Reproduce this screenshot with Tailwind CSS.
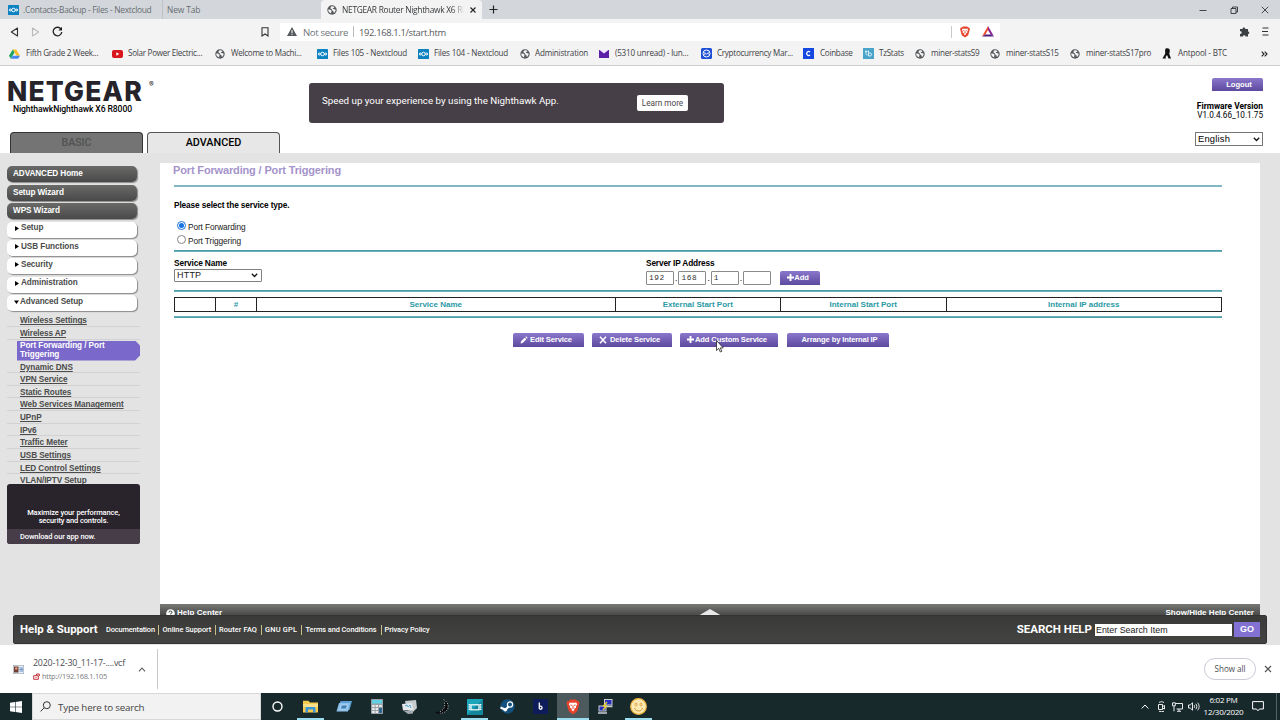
<!DOCTYPE html>
<html lang="en">
<head>
  <meta charset="UTF-8" />
  <meta name="viewport" content="width=device-width, initial-scale=1.0"/>
  <title>NETGEAR Router Nighthawk X6 R8000</title>
  <script src="https://cdn.jsdelivr.net/npm/@tailwindcss/browser@4"></script>
</head>
<body class="w-[1280px] h-[720px] overflow-hidden bg-white flex flex-col font-['Liberation_Sans',Arial,sans-serif] text-[8.3px] leading-none text-black whitespace-nowrap">

  <!-- Shared icons -->
  <svg class="hidden">
    <symbol id="globe" viewBox="0 0 10 10">
      <circle cx="5" cy="5" r="4.7" fill="#55585b"/>
      <path d="M1.200 4.600c1.200-.4 2.200-.1 2.800.5.500.6.800 1.200.3 1.800-.4.500.1.900-.1 1.500C2.300 8 1.100 6.600 1.200 4.600zM4.300 1.500c1.200-.5 2.400-.1 3.200.6-.2.900-.9.700-1.500 1.100-.5.400.1.900.8.900.7.100 1.100.6 1.900.6-.1 1.400-.7 2.500-1.700 3.200-.5-.6-.3-1.600-1.100-1.900-.9-.3-.9-1-.9-1.400C4.900 4 3.700 4.200 3.500 3.300c-.1-.7.300-1.400.8-1.800z" fill="#f3f3f3"/>
    </symbol>
    <symbol id="nextcloud" viewBox="0 0 11 10">
      <rect width="11" height="10" rx=".6" fill="#0d82c0"/>
      <g fill="none" stroke="#fff" stroke-width="1"><circle cx="5.500" cy="5" r="1.800"/><circle cx="2.300" cy="5" r="1"/><circle cx="8.700" cy="5" r="1"/></g>
    </symbol>
    <symbol id="lion" viewBox="0 0 12 14">
      <path d="M3.500.5h5l1.200 1.300 1.300-.1.700 2-.4 1.200-1.400 5.200c-.2.600-.5 1-1 1.300L6 13.500l-2.900-2.100c-.5-.3-.8-.7-1-1.300L.7 4.900.3 3.700l.7-2 1.300.1z" fill="#e8432a"/>
      <path d="M3.300 3l1.400.3h2.600L8.700 3l1 1.700-1.200 1.800.3 1-1.800 1.300.1 1L6 10.800 4.900 9.800l.1-1-1.800-1.300.3-1-1.200-1.800z" fill="#fff"/>
      <path d="M3.700 5.200l1.400.5M8.300 5.200l-1.400.5M6 5.500v2M5 7.900h2" stroke="#e8432a" stroke-width=".8" fill="none"/>
    </symbol>
  </svg>

  <!-- Tab strip -->
  <div class="h-[19px] shrink-0 bg-[#d3d7db] flex items-center font-['Open_Sans',sans-serif] text-[8.400px] tracking-[-0.29px] text-[#686d72]">
    <div class="w-[163px] h-full shrink-0 flex items-center pl-2 border-r border-[#bfc3c6]">
      <svg class="w-[11px] h-[10px]"><use href="#nextcloud"/></svg>
      <span class="ml-[4px] mt-px">.Contacts-Backup - Files - Nextcloud</span>
    </div>
    <div class="w-[158px] shrink-0 pl-[4px] pt-px tracking-[-0.1px]">New Tab</div>
    <div class="w-[161px] h-full shrink-0 flex items-center pl-[6px] bg-[#f3f3f3] text-[#3c4043] rounded-t-sm">
      <svg class="w-[10px] h-[10px]"><use href="#globe"/></svg>
      <span class="ml-[5px] mt-px w-[122px] overflow-hidden bg-gradient-to-r from-[#303336] from-90% to-[#f3f3f3] bg-clip-text text-transparent leading-3">NETGEAR Router Nighthawk X6 R8000</span>
      <svg class="ml-[6px] w-[6px] h-[6px]" viewBox="0 0 6 6"><path d="M.5.5l5 5M5.500.500l-5 5" stroke="#222" stroke-width="1.100"/></svg>
    </div>
    <svg class="ml-[7px] w-[9px] h-[9px]" viewBox="0 0 9 9"><path d="M4.500.500v8M.5 4.500h8" stroke="#222" stroke-width="1.200"/></svg>
    <div class="ml-auto flex items-center pr-[11px] gap-[23px]">
      <svg class="w-[8px] h-[8px]" viewBox="0 0 8 8"><path d="M.5 4.500h7" stroke="#222" stroke-width=".8"/></svg>
      <svg class="w-[8px] h-[8px]" viewBox="0 0 8 8"><path d="M1 2.500h5v5H1zM2.500 2.500V1h5v5H6" fill="none" stroke="#222" stroke-width=".8"/></svg>
      <svg class="w-[8px] h-[8px]" viewBox="0 0 8 8"><path d="M.800.800l6.400 6.400M7.200.800L.8 7.200" stroke="#222" stroke-width=".8"/></svg>
    </div>
  </div>

  <!-- Address bar -->
  <div class="h-[25px] shrink-0 bg-[#f3f3f3] flex items-center font-['Open_Sans',sans-serif] text-[9.600px] tracking-[-0.35px] text-[#70757a]">
    <svg class="ml-[10px] w-[9px] h-[10px]" viewBox="0 0 9 10"><path d="M7.500 1v8L1.300 5z" fill="none" stroke="#333" stroke-width="1.100" stroke-linejoin="round"/></svg>
    <svg class="ml-[12px] w-[9px] h-[10px]" viewBox="0 0 9 10"><path d="M1.500 1v8l6.200-4z" fill="none" stroke="#bbb" stroke-width="1.100" stroke-linejoin="round"/></svg>
    <svg class="ml-[12px] w-[11px] h-[11px]" viewBox="0 0 11 11"><path d="M9.200 3.300A4.300 4.300 0 1 0 9.800 6" fill="none" stroke="#222" stroke-width="1.300"/><path d="M10 .8v3.600H6.400z" fill="#222"/></svg>
    <svg class="ml-[198px] w-[8px] h-[10px]" viewBox="0 0 8 10"><path d="M1 .8h6v8.200L4 7 1 9z" fill="none" stroke="#333" stroke-width="1.100"/></svg>
    <div class="ml-[11px] w-[720px] h-[18px] bg-white flex items-center">
      <svg class="ml-[7px] w-[10px] h-[9px]" viewBox="0 0 10 9"><path d="M5 0l5 9H0z" fill="#55585b"/><path d="M5 3v3M5 6.700v1.200" stroke="#fff" stroke-width="1"/></svg>
      <span class="ml-[6px] mt-[2px] w-[50px]">Not secure</span>
      <span class="w-[6px] h-[11px] border-l border-[#bbb]"></span>
      <span class="mt-[2px] text-[9.400px] tracking-[-0.35px] text-[#55595d]">192.168.1.1/start.htm</span>
      <span class="ml-auto w-px h-[12px] bg-[#c8c8c8]"></span>
      <svg class="ml-[7px] w-[12px] h-[12px]"><use href="#lion"/></svg>
      <svg class="ml-[11px] mr-[6px] w-[12px] h-[11px]" viewBox="0 0 12 11"><path d="M6 0L0 10.500l3.400-2L6 4z" fill="#f0502d"/><path d="M6 0l6 10.500-3.400-2L6 4z" fill="#8b2391"/><path d="M0 10.500h12l-3.400-2H3.400z" fill="#4d2080"/></svg>
    </div>
    <svg class="ml-auto w-[11px] h-[11px]" viewBox="0 0 11 11"><path d="M1 3h2.500a1.400 1.400 0 1 1 2.800 0H9v2.500a1.300 1.300 0 1 1 0 2.600v2.400H6.500a1.300 1.300 0 1 0-2.600 0H1V7.800a1.300 1.300 0 1 0 0-2.500z" fill="#3c4043"/></svg>
    <svg class="ml-[12px] mr-[11px] w-[7px] h-[9px]" viewBox="0 0 7 9"><path d="M.5 1h6M0 4.500h6M.5 8h6" stroke="#333" stroke-width="1"/></svg>
  </div>

  <!-- Bookmarks -->
  <div class="h-[22px] shrink-0 bg-[#f3f3f3] border-b border-[#cfcfcf] flex items-center pl-[9px] pb-[2px] font-['Open_Sans',sans-serif] text-[8.100px] tracking-[-0.28px] text-[#3f4246]">
    <div class="w-[103px] shrink-0 flex items-center gap-[6px]">
      <svg class="w-[11px] h-[10px]" viewBox="0 0 11 10"><path d="M3.700.500h3.600L11 6.700H7.400z" fill="#fbc02d"/><path d="M3.700.500L0 6.700l1.800 3 3.700-6.200z" fill="#1fa463"/><path d="M3.700 6.700H11l-1.800 3H1.800z" fill="#4688f4"/></svg>
      <span>Fifth Grade 2 Week...</span>
    </div>
    <div class="w-[103px] shrink-0 flex items-center gap-[5px]">
      <svg class="w-[11px] h-[8px]" viewBox="0 0 11 8"><rect width="11" height="8" rx="2" fill="#d8161c"/><path d="M4.300 2.200v3.600L7.300 4z" fill="#fff"/></svg>
      <span>Solar Power Electric...</span>
    </div>
    <div class="w-[102px] shrink-0 flex items-center gap-[6px]">
      <svg class="w-[10px] h-[10px]"><use href="#globe"/></svg>
      <span>Welcome to Machi...</span>
    </div>
    <div class="w-[101px] shrink-0 flex items-center gap-[5px] tracking-[-0.18px]">
      <svg class="w-[11px] h-[10px]"><use href="#nextcloud"/></svg>
      <span>Files 105 - Nextcloud</span>
    </div>
    <div class="w-[102px] shrink-0 flex items-center gap-[5px] tracking-[-0.18px]">
      <svg class="w-[11px] h-[10px]"><use href="#nextcloud"/></svg>
      <span>Files 104 - Nextcloud</span>
    </div>
    <div class="w-[79px] shrink-0 flex items-center gap-[5px] tracking-[-0.2px]">
      <svg class="w-[10px] h-[10px]"><use href="#globe"/></svg>
      <span>Administration</span>
    </div>
    <div class="w-[102px] shrink-0 flex items-center gap-[6px] tracking-[-0.2px]">
      <svg class="w-[10px] h-[8px]" viewBox="0 0 10 8"><rect width="10" height="8" fill="#5b1fa8"/><path d="M.5 0h9L5 3.500z" fill="#f3e8ff"/></svg>
      <span>(5310 unread) - lun...</span>
    </div>
    <div class="w-[102px] shrink-0 flex items-center gap-[5px]">
      <svg class="w-[11px] h-[11px]" viewBox="0 0 11 11"><rect width="11" height="11" rx="1.500" fill="#1c4fd6"/><circle cx="5.500" cy="5.500" r="3.500" fill="none" stroke="#fff"/><path d="M3.800 7V4.500l1.700 1.800 1.700-1.800V6.500" fill="none" stroke="#fff" stroke-width=".8"/></svg>
      <span>Cryptocurrency Mar...</span>
    </div>
    <div class="w-[60px] shrink-0 flex items-center gap-[6px]">
      <svg class="w-[11px] h-[11px]" viewBox="0 0 11 11"><rect width="11" height="11" fill="#1548e0"/><path d="M7 4a2 2 0 1 0 0 3" fill="none" stroke="#fff" stroke-width="1.300"/></svg>
      <span>Coinbase</span>
    </div>
    <div class="w-[52px] shrink-0 flex items-center gap-[5px]">
      <svg class="w-[11px] h-[11px]" viewBox="0 0 11 11"><rect width="11" height="11" fill="#4aa3c9"/><path d="M3 2.500v3M2 3.500h2.500M3 5.500c0 1 .5 1.500 1.500 1.500M5.500 2.500v5.500h1.500a1.500 1.500 0 0 0 0-3H5.500" fill="none" stroke="#e6f6fc" stroke-width=".9"/></svg>
      <span>TzStats</span>
    </div>
    <div class="w-[75px] shrink-0 flex items-center gap-[6px]">
      <svg class="w-[10px] h-[10px]"><use href="#globe"/></svg>
      <span>miner-statsS9</span>
    </div>
    <div class="w-[80px] shrink-0 flex items-center gap-[6px]">
      <svg class="w-[10px] h-[10px]"><use href="#globe"/></svg>
      <span>miner-statsS15</span>
    </div>
    <div class="w-[92px] shrink-0 flex items-center gap-[6px]">
      <svg class="w-[10px] h-[10px]"><use href="#globe"/></svg>
      <span>miner-statsS17pro</span>
    </div>
    <div class="shrink-0 flex items-center gap-[6px] tracking-[-0.18px]">
      <svg class="w-[10px] h-[11px]" viewBox="0 0 10 11"><path d="M3.500.800C5.500-.2 8 .5 7.800 3c0 1.500-.8 2.200-.3 3.500L9 10.500H6.500L5 7 3.500 9l.5 1.500H.5L3 6C3.700 4.500 2.500 3 3.500.800z" fill="#111"/></svg>
      <span>Antpool - BTC</span>
    </div>
    <svg class="ml-auto mr-[12px] w-[7px] h-[6px]" viewBox="0 0 7 6"><path d="M.7.700L3 3 .7 5.300M3.700.700L6 3 3.700 5.300" fill="none" stroke="#222" stroke-width="1.100"/></svg>
  </div>

  <!-- Router page -->
  <div class="relative h-[579px] shrink-0 flex flex-col bg-[#e3e3e3]">

    <!-- Header -->
    <header class="h-[87px] shrink-0 bg-white flex">
      <div class="w-[299px] shrink-0 flex flex-col">
        <div class="mt-[13px] ml-[7px] h-[25px] flex items-center font-['Inter',sans-serif] font-extrabold text-[26.500px] leading-[25px] text-[#26232a]">
          <span class="w-[142px] tracking-[1.200px]">NETGEAR</span><span class="mt-[-15px] text-[7px] leading-none font-normal">®</span>
        </div>
        <div class="ml-[13px] font-['Roboto',sans-serif] font-medium text-[8.600px] tracking-[-0.1px] leading-[10px]">NighthawkNighthawk X6 R8000</div>
        <div class="mt-auto ml-[10px] flex gap-1">
          <div class="w-[133px] h-[21px] flex items-center justify-center rounded-t-[4px] border border-b-0 border-[#333] bg-[#737473] font-['Roboto',sans-serif] font-medium text-[10.600px] text-[#515251]">BASIC</div>
          <div class="w-[133px] h-[21px] flex items-center justify-center rounded-t-[4px] border border-b-0 border-[#555] bg-[#e6e7e6] font-['Roboto',sans-serif] font-medium text-[10.800px] text-black">ADVANCED</div>
        </div>
      </div>
      <div class="ml-[10px] mt-[17px] w-[415px] h-[40px] flex rounded-[3px] bg-[#473f48] font-['Roboto',sans-serif]">
        <span class="ml-[13px] mt-[11.500px] w-[315px] text-[9.750px] leading-3 text-white">Speed up your experience by using the Nighthawk App.</span>
        <a class="mt-[12px] w-[51px] h-[15.500px] flex items-center justify-center rounded-[2px] bg-white text-[8.200px] text-[#4b444c]">Learn more</a>
      </div>
      <div class="ml-auto mr-[17px] flex flex-col items-end">
        <a class="mt-[12px] w-[51px] h-[13px] pl-[3px] flex items-center justify-center rounded-t-[2px] bg-gradient-to-b from-[#8b78cc] to-[#5d4a9e] font-bold text-[7.600px] text-white">Logout</a>
        <span class="mt-[10px] font-['Roboto',sans-serif] font-bold text-[8.400px] leading-[10px]">Firmware Version</span>
        <span class="font-['Roboto',sans-serif] text-[8.200px] leading-[9px]">V1.0.4.66_10.1.75</span>
        <div class="mt-[12px] w-[68px] h-[14px] px-[2px] flex items-center justify-between border border-[#767676] bg-white text-[9.400px] tracking-[0.2px]">
          English
          <svg class="w-[7px] h-[5px]" viewBox="0 0 7 5"><path d="M.8.800l2.700 2.700L6.200.800" fill="none" stroke="#111" stroke-width="1.300"/></svg>
        </div>
      </div>
    </header>

    <div class="flex-1 flex">
      <!-- Side menu -->
      <nav class="relative w-[160px] shrink-0 pl-[7px] pt-[13px] flex flex-col text-[8.200px] tracking-[-0.08px]">
        <div class="w-[130px] flex flex-col gap-[2.500px] font-bold text-white">
          <a class="h-[16px] pl-[6px] leading-[15.500px] rounded-[5px] bg-gradient-to-b from-[#6a6b69] to-[#484948] shadow-[1px_1px_1px_#8a8a8a]">ADVANCED Home</a>
          <a class="h-[16px] pl-[6px] leading-[15.500px] rounded-[5px] bg-gradient-to-b from-[#6a6b69] to-[#484948] shadow-[1px_1px_1px_#8a8a8a]">Setup Wizard</a>
          <a class="h-[16px] pl-[6px] leading-[15.500px] rounded-[5px] bg-gradient-to-b from-[#6a6b69] to-[#484948] shadow-[1px_1px_1px_#8a8a8a]">WPS Wizard</a>
        </div>
        <div class="mt-[3px] w-[130px] flex flex-col gap-[2.200px] font-bold text-[#4b4c4b]">
          <a class="h-[16px] pl-[8px] pb-[3px] flex items-center gap-[2px] rounded-[5px] bg-white shadow-[1px_1px_1px_#8a8a8a]"><svg class="w-[4px] h-[5px]" viewBox="0 0 4 5"><path d="M0 0l4 2.500L0 5z"/></svg>Setup</a>
          <a class="h-[16px] pl-[8px] pb-[3px] flex items-center gap-[2px] rounded-[5px] bg-white shadow-[1px_1px_1px_#8a8a8a]"><svg class="w-[4px] h-[5px]" viewBox="0 0 4 5"><path d="M0 0l4 2.500L0 5z"/></svg>USB Functions</a>
          <a class="h-[16px] pl-[8px] pb-[3px] flex items-center gap-[2px] rounded-[5px] bg-white shadow-[1px_1px_1px_#8a8a8a]"><svg class="w-[4px] h-[5px]" viewBox="0 0 4 5"><path d="M0 0l4 2.500L0 5z"/></svg>Security</a>
          <a class="h-[16px] pl-[8px] pb-[3px] flex items-center gap-[2px] rounded-[5px] bg-white shadow-[1px_1px_1px_#8a8a8a]"><svg class="w-[4px] h-[5px]" viewBox="0 0 4 5"><path d="M0 0l4 2.500L0 5z"/></svg>Administration</a>
          <a class="h-[16px] pl-[7px] pb-px flex items-center gap-[1px] rounded-[5px] bg-white shadow-[1px_1px_1px_#8a8a8a]"><svg class="w-[5px] h-[4px]" viewBox="0 0 5 4"><path d="M0 .5h5L2.500 4z"/></svg>Advanced Setup</a>
        </div>
        <div class="mt-[3.500px] w-[133px] flex flex-col font-bold text-[#4b4c4b]">
          <a class="h-[12.650px] pl-[13px] leading-[13px] underline border-b border-[#d2d2d2]">Wireless Settings</a>
          <a class="h-[12.650px] pl-[13px] leading-[13px] underline border-b border-[#d2d2d2]">Wireless AP</a>
          <a class="mt-px h-[20px] ml-[10px] pl-[3px] leading-[9.600px] bg-[#7b68cb] text-white [clip-path:polygon(0_0,96%_0,100%_25%,100%_75%,96%_100%,0_100%)]">Port Forwarding / Port<br>Triggering</a>
          <a class="h-[12.650px] pl-[13px] leading-[13px] underline border-b border-[#d2d2d2]">Dynamic DNS</a>
          <a class="h-[12.650px] pl-[13px] leading-[13px] underline border-b border-[#d2d2d2]">VPN Service</a>
          <a class="h-[12.650px] pl-[13px] leading-[13px] underline border-b border-[#d2d2d2]">Static Routes</a>
          <a class="h-[12.650px] pl-[13px] leading-[13px] underline border-b border-[#d2d2d2]">Web Services Management</a>
          <a class="h-[12.650px] pl-[13px] leading-[13px] underline border-b border-[#d2d2d2]">UPnP</a>
          <a class="h-[12.650px] pl-[13px] leading-[13px] underline border-b border-[#d2d2d2]">IPv6</a>
          <a class="h-[12.650px] pl-[13px] leading-[13px] underline border-b border-[#d2d2d2]">Traffic Meter</a>
          <a class="h-[12.650px] pl-[13px] leading-[13px] underline border-b border-[#d2d2d2]">USB Settings</a>
          <a class="h-[12.650px] pl-[13px] leading-[13px] underline border-b border-[#d2d2d2]">LED Control Settings</a>
          <a class="h-[12.650px] pl-[13px] leading-[13px] underline">VLAN/IPTV Setup</a>
        </div>
        <!-- App promo covers the end of the list -->
        <div class="absolute left-[7px] top-[331px] w-[133px] h-[60px] flex flex-col rounded-[3px] overflow-hidden bg-[#29232b] font-['Roboto',sans-serif] font-medium text-[7.500px] tracking-[-0.12px] text-white">
          <div class="h-[45px] pt-[25px] text-center leading-[8px]">Maximize your performance,<br>security and controls.</div>
          <div class="flex-1 pl-[13px] leading-[15px] bg-[#463d49]">Download our app now.</div>
        </div>
      </nav>

      <!-- Port forwarding panel -->
      <main class="mt-[10px] w-[1100px] h-[453px] bg-white flex flex-col">
        <div class="pl-[14px] w-[1062px] flex flex-col">
          <h1 class="h-[15px] -ml-px leading-[15px] font-bold text-[11px] tracking-[-0.15px] text-[#a594cb]">Port Forwarding / Port Triggering</h1>
          <div class="mt-[7px] h-[2px] bg-[#82b8c6]"></div>
          <p class="mt-[12px] h-[12px] leading-[12px] font-bold tracking-[-0.13px]">Please select the service type.</p>
          <label class="mt-[8px] h-[14px] pl-[3px] flex items-center gap-[2px] tracking-[-0.1px] text-[#222]"><svg class="mb-px w-[9px] h-[9px]" viewBox="0 0 9 9"><circle cx="4.500" cy="4.500" r="4" fill="#fff" stroke="#1a6fd8"/><circle cx="4.500" cy="4.500" r="2.500" fill="#1173e6"/></svg><span class="mt-[2px]">Port Forwarding</span></label>
          <label class="h-[14px] pl-[3px] flex items-center gap-[2px] tracking-[-0.1px] text-[#222]"><svg class="mb-px w-[9px] h-[9px]" viewBox="0 0 9 9"><circle cx="4.500" cy="4.500" r="4" fill="#fff" stroke="#777" stroke-width=".9"/></svg><span class="mt-[2px]">Port Triggering</span></label>
          <div class="mt-[3px] h-[2px] bg-gradient-to-b from-[#348e9a] to-[#7cc0c6]"></div>
          <div class="h-[38px] flex">
            <div class="w-[472px] pt-[5px]">
              <div class="h-[12px] leading-[12px] font-bold tracking-[-0.13px]">Service Name</div>
              <div class="w-[88px] h-[13px] pl-[2px] pr-[3px] flex items-center justify-between rounded-[1px] border border-[#808080] text-[9px] tracking-[0.2px] text-[#222]">
                HTTP
                <svg class="w-[7px] h-[5px]" viewBox="0 0 7 5"><path d="M.8.800l2.700 2.700L6.200.800" fill="none" stroke="#111" stroke-width="1.300"/></svg>
              </div>
            </div>
            <div class="pt-[5px]">
              <div class="h-[14px] leading-[12px] font-bold tracking-[-0.15px]">Server IP Address</div>
              <div class="flex items-center">
                <span class="w-[28px] h-[14px] pl-[2px] leading-[13px] rounded-[1px] border border-[#8a8a8a] font-['Liberation_Mono',monospace] text-[7.800px] tracking-[0.6px] text-[#333]">192</span>
                <span class="w-[4.400px] pl-px">.</span>
                <span class="w-[28px] h-[14px] pl-[2px] leading-[13px] rounded-[1px] border border-[#8a8a8a] font-['Liberation_Mono',monospace] text-[7.800px] tracking-[0.6px] text-[#333]">168</span>
                <span class="w-[4.400px] pl-px">.</span>
                <span class="w-[28px] h-[14px] pl-[2px] leading-[13px] rounded-[1px] border border-[#8a8a8a] font-['Liberation_Mono',monospace] text-[7.800px] tracking-[0.6px] text-[#333]">1</span>
                <span class="w-[4.400px] pl-px">.</span>
                <span class="w-[28px] h-[14px] rounded-[1px] border border-[#8a8a8a]"></span>
                <a class="ml-[9px] w-[40px] h-[14px] pl-[7px] pb-px flex items-center rounded-t-[2px] bg-gradient-to-b from-[#8b78cc] to-[#5d4a9e] font-bold text-[7.600px] text-white"><svg class="w-[7px] h-[7px]" viewBox="0 0 7 7"><path d="M3.500 0v7M0 3.500h7" stroke="#fff" stroke-width="1.900"/></svg>Add</a>
              </div>
            </div>
          </div>
          <div class="h-[2px] bg-gradient-to-b from-[#348e9a] to-[#7cc0c6]"></div>
          <div class="mt-[5px] h-[15px] grid grid-cols-[41px_41px_358.500px_165.500px_165.500px_1fr] border border-[#222] divide-x divide-[#222] text-center leading-[13px] font-bold text-[8px] text-[#2a9aa6]">
            <div></div>
            <div>#</div>
            <div>Service Name</div>
            <div>External Start Port</div>
            <div>Internal Start Port</div>
            <div>Internal IP address</div>
          </div>
          <div class="mt-[4px] h-[2px] bg-gradient-to-b from-[#7cc0c6] to-[#348e9a]"></div>
          <div class="mt-[15px] ml-[339px] flex font-bold text-[7.600px] tracking-[-0.13px] text-white">
            <a class="mr-[8px] w-[71px] h-[14px] pl-[7px] pb-px flex items-center gap-[2px] rounded-t-[2px] bg-gradient-to-b from-[#8b78cc] to-[#5d4a9e]"><svg class="w-[8px] h-[8px]" viewBox="0 0 8 8"><path d="M.5 7.500l.6-2.200 3.600-3.600 1.600 1.600-3.600 3.600zM5.300 1.100l.8-.8 1.600 1.600-.8.800z" fill="#fff"/></svg>Edit Service</a>
            <a class="mr-[8px] w-[80px] h-[14px] pl-[7px] pb-px flex items-center gap-[3px] rounded-t-[2px] bg-gradient-to-b from-[#8b78cc] to-[#5d4a9e]"><svg class="w-[8px] h-[8px]" viewBox="0 0 8 8"><path d="M1 .8l6 6.400M7 .8L1 7.200" stroke="#fff" stroke-width="1.500"/></svg>Delete Service</a>
            <a class="mr-[9px] w-[98px] h-[14px] pl-[7px] pb-px flex items-center gap-px rounded-t-[2px] bg-gradient-to-b from-[#8b78cc] to-[#5d4a9e]"><svg class="w-[7px] h-[7px]" viewBox="0 0 7 7"><path d="M3.500 0v7M0 3.500h7" stroke="#fff" stroke-width="1.900"/></svg>Add Custom Service</a>
            <a class="w-[102px] h-[14px] pb-px pl-[3px] flex items-center justify-center rounded-t-[2px] bg-gradient-to-b from-[#8b78cc] to-[#5d4a9e]">Arrange by Internal IP</a>
          </div>
        </div>
        <!-- Help center bar -->
        <div class="mt-auto h-[12px] px-[6px] flex justify-between overflow-hidden bg-gradient-to-b from-[#787a77] to-[#454645] font-bold text-[8.050px] text-white">
          <span class="flex-1 pt-[5px] flex gap-[2px]"><svg class="w-[9px] h-[9px]" viewBox="0 0 9 9"><circle cx="4.500" cy="4.500" r="4.300" fill="#fff"/><path d="M3 3.600c0-2 3-2 3-.2 0 1-1.500 1-1.500 2.200M4.500 6.500v1" fill="none" stroke="#565" stroke-width="1.100"/></svg>Help Center</span>
          <svg class="mt-[5px] w-[24px] h-[7px]" viewBox="0 0 24 7"><path d="M12 0l12 7H0z" fill="#e8e8e8"/></svg>
          <span class="flex-1 pt-[5px] text-right">Show/Hide Help Center</span>
        </div>
      </main>
    </div>

    <!-- Footer overlaps the help bar -->
    <footer class="absolute left-[13px] top-[549px] w-[1254px] h-[29px] pl-[6px] pr-[6px] flex items-center rounded-[2px] bg-gradient-to-b from-[#3a3b39] to-[#434441] border border-[#333] font-['Roboto',sans-serif] font-medium text-[7.400px] tracking-[-0.03px] text-white">
      <span class="w-[86px] font-bold text-[11.400px] tracking-normal">Help &amp; Support</span>
      <a class="mt-px w-[53px] leading-[10px] tracking-[-0.13px] border-r border-[#c9bf8a]">Documentation</a>
      <a class="mt-px w-[56.500px] pl-[3.500px] leading-[10px] border-r border-[#c9bf8a]">Online Support</a>
      <a class="mt-px w-[46px] pl-[3.500px] leading-[10px] tracking-[0.08px] border-r border-[#c9bf8a]">Router FAQ</a>
      <a class="mt-px w-[40.500px] pl-[3.500px] leading-[10px] tracking-[0.2px] border-r border-[#c9bf8a]">GNU GPL</a>
      <a class="mt-px w-[79.500px] pl-[3.500px] leading-[10px] tracking-[-0.08px] border-r border-[#c9bf8a]">Terms and Conditions</a>
      <a class="mt-px pl-[3px] leading-[10px] tracking-[-0.08px]">Privacy Policy</a>
      <span class="ml-auto mr-[3px] font-bold text-[11.500px] tracking-normal">SEARCH HELP</span>
      <span class="w-[137px] h-[12px] pl-px leading-[12px] bg-white font-['Liberation_Sans',Arial,sans-serif] font-normal text-[8.900px] tracking-normal text-[#222]">Enter Search Item</span>
      <a class="ml-[2px] w-[26px] h-[15px] flex items-center justify-center bg-[#8271d3] font-['Liberation_Sans',Arial,sans-serif] font-bold text-[9px]">GO</a>
    </footer>

    <!-- Mouse pointer -->
    <svg class="absolute left-[716px] top-[274px] w-[8px] h-[13px]" viewBox="0 0 8 13"><path d="M.5.5v10l2.300-2.100 1.500 3.600 1.500-.7-1.500-3.400h3z" fill="#fff" stroke="#222" stroke-width=".8"/></svg>
  </div>

  <!-- Downloads bar -->
  <div class="h-[48px] shrink-0 bg-white flex items-center font-['Open_Sans',sans-serif]">
    <div class="w-[158px] h-[40px] pl-[13px] flex items-center border-r border-[#c9c9c9]">
      <svg class="w-[11px] h-[9px]" viewBox="0 0 11 9"><rect x=".3" y=".3" width="10.400" height="8.400" fill="#e6edf5" stroke="#9aa6b4" stroke-width=".6"/><rect x="1" y="1.500" width="4.500" height="6" fill="#743d34"/><circle cx="3.200" cy="3.500" r="1.200" fill="#e1a783"/><path d="M6.500 3h3.500M6.500 4.500h3.500M6.500 6h3.500" stroke="#4c7ab8" stroke-width=".8"/></svg>
      <div class="ml-[9px] mt-[2px] w-[105px] flex flex-col gap-[5px]">
        <span class="text-[8.900px] tracking-[-0.22px] text-[#4a4d51]">2020-12-30_11-17-....vcf</span>
        <span class="flex items-center gap-[2px] text-[7.400px] tracking-[-0.24px] text-[#7a7d80]"><svg class="w-[7px] h-[7px]" viewBox="0 0 7 7"><path d="M.7 2.700h4.600v3.600H.7zM3.500 2.500V1h2.800v2" fill="none" stroke="#c4303a"/><path d="M2.500 4.500h1" stroke="#c4303a"/></svg>http://192.168.1.105</span>
      </div>
      <svg class="w-[8px] h-[5px]" viewBox="0 0 8 5"><path d="M1 4.300L4 1l3 3.300" fill="none" stroke="#555" stroke-width="1.100"/></svg>
    </div>
    <a class="ml-auto w-[52px] h-[22px] flex items-center justify-center rounded-full border border-[#cfc9d6] text-[8.100px] tracking-[-0.05px] text-[#4a4d51]">Show all</a>
    <svg class="ml-[8px] mr-[8px] w-[8px] h-[8px]" viewBox="0 0 8 8"><path d="M1 1l6 6M7 1L1 7" stroke="#555" stroke-width="1.200"/></svg>
  </div>

  <!-- Windows taskbar -->
  <div class="h-[27px] shrink-0 bg-[#18292c] flex items-center font-['Open_Sans',sans-serif]">
    <div class="w-[32px] flex justify-center">
      <svg class="w-[12px] h-[12px]" viewBox="0 0 12 12"><path d="M0 1.700l5-.7v4.700H0zM5.600.9L12 0v5.700H5.600zM0 6.300h5V11l-5-.7zM5.600 6.300H12V12l-6.400-.9z" fill="#fff"/></svg>
    </div>
    <div class="w-[229px] h-full pl-[7px] flex items-center bg-[#f2f2f2] border border-[#d8d8d8] text-[9.800px] tracking-[-0.2px] text-[#444]">
      <svg class="w-[11px] h-[11px]" viewBox="0 0 11 11"><circle cx="6.800" cy="4.200" r="3.500" fill="none" stroke="#333"/><path d="M4.300 6.700L.6 10.400" stroke="#333"/></svg>
      <span class="ml-[7px] mt-[2px]">Type here to search</span>
    </div>
    <div class="h-full flex">
      <div class="w-[33px] h-full flex items-center justify-center"><svg class="w-[11px] h-[11px]" viewBox="0 0 11 11"><circle cx="5.500" cy="5.500" r="4.500" fill="none" stroke="#fff" stroke-width="1.400"/></svg></div>
      <div class="w-[33px] h-full flex items-center justify-center bg-[linear-gradient(#9bdcef,#9bdcef)] bg-[length:27px_2px] bg-[position:bottom] bg-no-repeat"><svg class="w-[15px] h-[13px]" viewBox="0 0 15 13"><path d="M0 .8h5.500L7 2.500h8v10H0z" fill="#f6c94f"/><path d="M0 4h15v3H0z" fill="#fbe08a"/><path d="M2.500 12.500V8.300c0-.8.5-1.300 1.300-1.300h7.400c.8 0 1.300.5 1.300 1.300v4.200H10V9.500H5v3z" fill="#3a97d8"/></svg></div>
      <div class="w-[33px] h-full flex items-center justify-center"><svg class="w-[16px] h-[13px]" viewBox="0 0 16 13"><path d="M4.500 1H16l-2.500 9H2z" fill="#5b9fd6"/><path d="M3 3h11l-2 8.500H.5z" fill="#8fc2ea"/><path d="M5.500 5h6L10.300 9h-6z" fill="#3f80b9" stroke="#cfe6f8" stroke-width=".7"/></svg></div>
      <div class="w-[33px] h-full flex items-center justify-center"><svg class="w-[12px] h-[15px]" viewBox="0 0 12 15"><rect width="12" height="15" rx=".8" fill="#9a9fa3"/><rect x="1" y="1" width="10" height="3.500" fill="#5fd0e4"/><path d="M1.200 6h2.400v2H1.200zM4.600 6H7v2H4.600zM1.200 9h2.400v2H1.200zM4.600 9H7v2H4.600zM1.200 12h2.400v2H1.200zM4.600 12H7v2H4.600zM8.200 6h2.600v2H8.200z" fill="#e9edf0"/><path d="M8.200 9h2.600v5H8.200z" fill="#24618e"/></svg></div>
      <div class="w-[32px] h-full flex items-center justify-center"><svg class="w-[16px] h-[14px]" viewBox="0 0 16 14"><path d="M4 1l11-1 1 8-4 4-6-2z" fill="#c6cbce"/><path d="M1 4l10-1 1.500 7L2 10.500z" fill="#e4e8ea"/><path d="M3 11l9-.5v3L7 14z" fill="#a4aaae"/><path d="M4 6l2-1 1 2 2-2 1 3" stroke="#4fa7d2" fill="none"/></svg></div>
      <div class="w-[33px] h-full flex items-center justify-center"><svg class="w-[16px] h-[15px]" viewBox="0 0 16 15"><path d="M9.500.5c7.500 3 6.500 14-3.500 14-2.500 0-4-.5-5-1.500 7 .5 11.500-5 8.500-12.500z" fill="#090b0c"/><path d="M9.500.700c7 3 6.500 13.500-3.500 13.500M10.300 3.500c1.500 4-1 8.500-5.500 9.500" fill="none" stroke="#b4babc" stroke-width=".9" stroke-dasharray="1.300 1.200"/></svg></div>
      <div class="w-[33px] h-full flex items-center justify-center bg-[linear-gradient(#9bdcef,#9bdcef)] bg-[length:27px_2px] bg-[position:bottom] bg-no-repeat"><svg class="w-[16px] h-[16px]" viewBox="0 0 16 16"><rect width="16" height="16" fill="#12879c"/><path d="M0 0h16L0 16z" fill="#1ba5ba"/><path d="M2.500 5v6.500M13.500 5v6.500" stroke="#fff" stroke-width="1.600" stroke-dasharray="1.500 .8"/><rect x="4" y="5.800" width="8" height="5" fill="none" stroke="#fff" stroke-width="1.200"/></svg></div>
      <div class="w-[33px] h-full flex items-center justify-center"><svg class="w-[15px] h-[15px]" viewBox="0 0 15 15"><circle cx="7.500" cy="7.500" r="7.200" fill="#14507e"/><path d="M.5 8.500l5 2.200L9 7" fill="none" stroke="#fff" stroke-width="2.200"/><circle cx="10" cy="5.500" r="2.600" fill="#14507e" stroke="#fff" stroke-width="1.200"/><circle cx="5.300" cy="10.700" r="1.800" fill="#fff"/></svg></div>
      <div class="w-[33px] h-full flex items-center justify-center"><svg class="w-[15px] h-[15px]" viewBox="0 0 15 15"><rect width="15" height="15" fill="#0f1c5b"/><path d="M6.300 3.500v6a1.500 1.500 0 1 0 1.200-2.300H6.300" fill="none" stroke="#fff" stroke-width="1.300"/></svg></div>
      <div class="w-[32px] h-full flex items-center justify-center bg-[#4c5a5d] border-b-2 border-[#9bdcef] pt-[2px]"><svg class="w-[14px] h-[16px]"><use href="#lion"/></svg></div>
      <div class="w-[33px] h-full flex items-center justify-center"><svg class="w-[15px] h-[15px]" viewBox="0 0 15 15"><rect x="6.500" y=".5" width="7.500" height="5.500" fill="#2430c0" stroke="#c9cdd0"/><rect x="1" y="7" width="7" height="5" fill="#2430c0" stroke="#c9cdd0"/><path d="M0 14h9M8.500 7.500h6" stroke="#c9cdd0" stroke-width="1.400"/><path d="M9 3L5.500 7h3L5 11" fill="none" stroke="#f4d92c" stroke-width="1.200"/></svg></div>
      <div class="w-[33px] h-full flex items-center justify-center bg-[linear-gradient(#9bdcef,#9bdcef)] bg-[length:27px_2px] bg-[position:bottom] bg-no-repeat"><svg class="w-[17px] h-[17px]" viewBox="0 0 17 17"><circle cx="8.500" cy="8.500" r="7.800" fill="#fbe9b4" stroke="#f0b640" stroke-width="1.200"/><path d="M4.500 10c1 4 7 4 8 0" fill="none" stroke="#d9962b"/><ellipse cx="6" cy="6.500" rx="1" ry="1.600" fill="none" stroke="#d9962b" stroke-width=".8"/><ellipse cx="11" cy="6.500" rx="1" ry="1.600" fill="none" stroke="#d9962b" stroke-width=".8"/></svg></div>
    </div>
    <div class="ml-auto h-full flex items-center">
      <svg class="w-[8px] h-[5px]" viewBox="0 0 8 5"><path d="M.7 4.500L4 1l3.300 3.500" fill="none" stroke="#fff"/></svg>
      <svg class="ml-[8px] w-[9px] h-[11px]" viewBox="0 0 9 11"><path d="M1.500 3.500h4v5h-4zM5.500 5.500l2-1v3.500l-2-1M2 1.500c1.500-1 3.500-1 5 0M2 10.300c1.500.5 3.500.5 5 0" fill="none" stroke="#fff" stroke-width=".9"/></svg>
      <svg class="ml-[6px] w-[11px] h-[10px]" viewBox="0 0 11 10"><path d="M3.500 1.500h7v5.500h-6M7 7v2M5 9.300h4M.5.800h2.800v3H.5zM2 4v5.300" fill="none" stroke="#fff" stroke-width=".9"/></svg>
      <svg class="ml-[5px] w-[12px] h-[9px]" viewBox="0 0 12 9"><path d="M.5 3h1.700l2.300-2.200v7.400L2.200 6H.5zM6 3c.7.800.7 2.200 0 3M7.800 1.800c1.300 1.500 1.300 3.900 0 5.400M9.600.7c2 2.200 2 5.400 0 7.600" fill="none" stroke="#fff" stroke-width=".9"/></svg>
      <div class="ml-[3px] mb-px w-[41px] flex flex-col gap-[4px] items-center text-[8px] leading-[8px] tracking-[-0.26px] text-white"><span>6:02 PM</span><span>12/30/2020</span></div>
      <svg class="ml-[8px] w-[12px] h-[11px]" viewBox="0 0 12 11"><path d="M.6.600h10.800v7.400H7.500L6 9.800 4.500 8H.6z" fill="none" stroke="#fff"/></svg>
      <div class="ml-[12px] mr-[3px] w-px h-full bg-[#566467]"></div>
    </div>
  </div>
</body>
</html>
